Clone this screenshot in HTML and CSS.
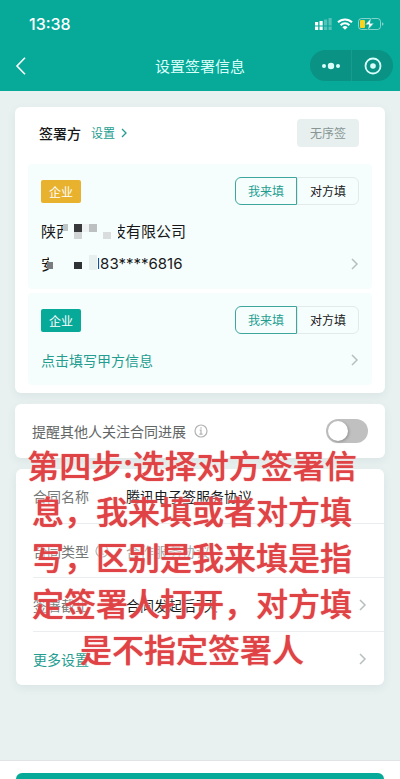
FILE: index.html
```html
<!DOCTYPE html>
<html lang="zh-CN">
<head>
    <meta charset="UTF-8">
    <meta name="viewport" content="width=device-width, initial-scale=1.0">
    <title>设置签署信息</title>
    <link rel="stylesheet" href="styles.css">
</head>
<body>
    <header class="top">
        <div class="status">
            <span class="time">13:38</span>
            <div class="status-icons">
                <svg width="17" height="12" viewBox="0 0 17 12" fill="#fff">
                    <path d="M0 4h3.200v3.500H0zM0 8.500h3.200V12H0zM4.500 3h3.200v4.500H4.500zM4.500 8.500h3.200V12H4.500z"/>
                    <path opacity=".3" d="M9 1.500h3.200v6H9zM9 8.500h3.200V12H9zM13.500 0h3.200v7.500h-3.200zM13.500 8.500h3.200V12h-3.200z"/>
                </svg>
                <svg width="16" height="12" viewBox="0 0 16 12" fill="none" stroke="#fff" stroke-width="2">
                    <path d="M1 4.300a10 10 0 0 1 14 0M3.600 7.200a6.200 6.200 0 0 1 8.800 0"/>
                    <path fill="#fff" stroke="none" d="M8 11.800 5.400 9.200a3.700 3.700 0 0 1 5.200 0z"/>
                </svg>
                <svg width="26" height="14" viewBox="0 0 26 14">
                    <rect x=".5" y="1.500" width="22" height="11" rx="3" fill="none" stroke="#fff" stroke-opacity=".5"/>
                    <path d="M24 5.200v3.600q1.500-.5 1.500-1.800T24 5.200z" fill="#fff" opacity=".5"/>
                    <rect x="2" y="3" width="5" height="8" rx="1" fill="#fbd21c"/>
                    <path d="M13.500.800 7 7.800h4L9.500 13.200 16 6.200h-4z" fill="#fff" stroke="#07a999" stroke-width=".6"/>
                </svg>
            </div>
        </div>
        <nav class="nav">
            <button class="back" aria-label="返回">
                <svg width="12" height="18" viewBox="0 0 12 18" fill="none" stroke="#fff" stroke-width="1.600"><path d="M10 .800 2 9l8 8.200"/></svg>
            </button>
            <h1>设置签署信息</h1>
            <div class="capsule">
                <button aria-label="更多">
                    <svg width="20" height="8" viewBox="0 0 20 8" fill="#d9fffa"><circle cx="3" cy="4" r="2"/><circle cx="10" cy="4" r="3.200"/><circle cx="17" cy="4" r="2"/></svg>
                </button>
                <button aria-label="关闭">
                    <svg width="18" height="18" viewBox="0 0 18 18" fill="#d9fffa"><circle cx="9" cy="9" r="7.500" fill="none" stroke="#d9fffa" stroke-width="1.800"/><circle cx="9" cy="9" r="2.800"/></svg>
                </button>
            </div>
        </nav>
    </header>

    <main>
        <section class="card signers">
            <div class="signers-head">
                <h2>签署方</h2>
                <a href="#">设置
                    <svg width="6" height="10" viewBox="0 0 6 10" fill="none" stroke="currentColor" stroke-width="1.300"><path d="M1 1l4 4-4 4"/></svg>
                </a>
                <button class="order">无序签</button>
            </div>

            <div class="party">
                <div class="party-top">
                    <span class="tag tag-yellow">企业</span>
                    <div class="segment">
                        <input type="radio" name="party1" id="p1-me" checked><label for="p1-me">我来填</label>
                        <input type="radio" name="party1" id="p1-other"><label for="p1-other">对方填</label>
                    </div>
                </div>
                <div class="line company">
                    <span>陕西</span>
                    <svg class="mosaic" width="55" height="20" viewBox="0 0 55 20">
                        <path fill="#f6fdfd" d="M0 0h55v20H0z"/>
                        <path fill="#bfc4c5" d="M0 3h5v7H0z"/>
                        <path fill="#37393b" d="M11 3h8v8h-8z"/>
                        <path fill="#d0d4d5" d="M11 11h8v7h-8z"/>
                        <path fill="#eef2f3" d="M19 3h7v8h-7z"/>
                        <path fill="#bcc0c1" d="M26 3h8v8h-8z"/>
                        <path fill="#d9dddd" d="M40 11h8v7h-8z"/>
                    </svg>
                    <span>技有限公司</span>
                </div>
                <div class="line person">
                    <span>安</span>
                    <svg class="mosaic" width="51" height="20" viewBox="0 0 51 20">
                        <path fill="#f6fdfd" d="M2 0h49v20H2z"/>
                        <path fill="#797d7f" d="M0 8h6v7H0z"/>
                        <path fill="#303335" d="M27 8h8v7h-8z"/>
                        <path fill="#e8efef" d="M42 1h8v15h-8z"/>
                    </svg>
                    <span class="phone">183****6816</span>
                    <svg class="arrow" width="8" height="12" viewBox="0 0 8 12"><path d="M1 1l5 5-5 5"/></svg>
                </div>
            </div>

            <div class="party">
                <div class="party-top">
                    <span class="tag">企业</span>
                    <div class="segment">
                        <input type="radio" name="party2" id="p2-me" checked><label for="p2-me">我来填</label>
                        <input type="radio" name="party2" id="p2-other"><label for="p2-other">对方填</label>
                    </div>
                </div>
                <a class="line" href="#">点击填写甲方信息
                    <svg class="arrow" width="8" height="12" viewBox="0 0 8 12"><path d="M1 1l5 5-5 5"/></svg>
                </a>
            </div>
        </section>

        <div class="options">
            <section class="card notify">
                <label for="notify">提醒其他人关注合同进展</label>
                <svg class="info" width="14" height="14" viewBox="0 0 14 14"><circle cx="7" cy="7" r="6"/><path d="M7 3.300v1.500M5.700 6.200H7v3.900M5.400 10.200h3.200"/></svg>
                <input type="checkbox" class="switch" id="notify">
            </section>

            <section class="card details">
                <div class="row">
                    <span class="name">合同名称</span>
                    <span class="value">腾讯电子签服务协议</span>
                </div>
                <div class="row">
                    <span class="name">合同类型
                        <svg class="info" width="14" height="14" viewBox="0 0 14 14"><circle cx="7" cy="7" r="6"/><path d="M7 3.300v1.500M5.700 6.200H7v3.900M5.400 10.200h3.200"/></svg>
                    </span>
                    <span class="value muted">合作服务协议</span>
                </div>
                <div class="row">
                    <span class="name">签署截止</span>
                    <span class="value">合同发起后7天</span>
                    <svg class="arrow" width="8" height="12" viewBox="0 0 8 12"><path d="M1 1l5 5-5 5"/></svg>
                </div>
                <a class="row" href="#">更多设置
                    <svg class="arrow" width="8" height="12" viewBox="0 0 8 12"><path d="M1 1l5 5-5 5"/></svg>
                </a>
            </section>

            <p class="caption">第四步:选择对方签署信<br>息，我来填或者对方填<br>写，区别是我来填是指<br>定签署人打开，对方填<br>是不指定签署人</p>
        </div>
    </main>

    <footer class="bottom">
        <button class="submit" aria-label="下一步"></button>
    </footer>
</body>
</html>
```

FILE: styles.css
```css
* {
    box-sizing: border-box;
}

body {
    margin: 0;
    min-height: 100vh;
    display: flex;
    flex-direction: column;
    background-color: #e8f1f0;
    color: #161819;
    font-family: "Noto Sans CJK SC", sans-serif;
    font-size: 14px;
    line-height: 20px;
}

h1, h2, p {
    margin: 0;
}

button {
    padding: 0;
    border: none;
    background: none;
    font: inherit;
    cursor: pointer;
}

a {
    color: #239d90;
    text-decoration: none;
}

svg {
    flex: none;
}

/* top bar */
.top {
    background-color: #07a999;
    color: #fff;
    padding-bottom: 8px;
}

.status {
    display: flex;
    align-items: center;
    justify-content: space-between;
    height: 48px;
    padding: 0 16px 0 29px;
}

.time {
    font-family: Inter, sans-serif;
    font-size: 16px;
    font-weight: 500;
}

.status-icons {
    display: flex;
    align-items: center;
    gap: 5px;
}

.nav {
    display: grid;
    grid-template-columns: 1fr auto 1fr;
    align-items: center;
    height: 35px;
    padding: 0 7px 0 15px;
}

.back {
    display: flex;
    justify-self: start;
}

h1 {
    padding-right: 8px;
    font-size: 15px;
    font-weight: 400;
    color: #d9fffa;
}

.capsule {
    justify-self: end;
    display: flex;
    width: 83px;
    height: 31px;
    border-radius: 16px;
    background-color: #0a9285;
}

.capsule button {
    flex: 1;
    display: flex;
    align-items: center;
    justify-content: center;
}

.capsule button + button {
    border-left: 1px solid #1b9a8e;
}

/* cards */
main {
    flex: 1;
    padding: 16px 0;
}

.card {
    margin: 0 15px;
    border-radius: 6px;
    background-color: #fff;
    box-shadow: 0 3px 8px rgba(60, 90, 100, 0.08);
}

.arrow {
    margin-left: auto;
    fill: none;
    stroke: #b9bfbf;
    stroke-width: 1.5;
}

.info {
    fill: none;
    stroke: #b3b3b3;
    stroke-width: 1.2;
}

.signers {
    padding: 12px 13px 8px;
}

.signers-head {
    display: flex;
    align-items: center;
    gap: 10px;
    margin-bottom: 17px;
    padding: 0 13px 0 11px;
}

h2 {
    font-size: 14px;
    font-weight: 500;
}

.signers-head a {
    display: flex;
    align-items: center;
    gap: 6px;
    font-size: 12px;
}

.order {
    width: 62px;
    height: 28px;
    margin-left: auto;
    border-radius: 4px;
    background-color: #e8f0ef;
    color: #879593;
    font-size: 12px;
}

.party {
    padding: 13px 13px 9px;
    border-radius: 4px;
    background-color: #f6fdfd;
}

.party + .party {
    margin-top: 4px;
}

.party-top {
    display: flex;
    align-items: center;
    justify-content: space-between;
    margin-bottom: 9px;
}

.tag {
    width: 40px;
    border-radius: 2px;
    background-color: #07a999;
    color: #fff;
    font-size: 12px;
    line-height: 23px;
    text-align: center;
}

.tag-yellow {
    background-color: #e8b22f;
}

.segment {
    display: flex;
}

.segment input {
    position: absolute;
    opacity: 0;
}

.segment label {
    width: 62px;
    border: 1px solid #e2eaea;
    border-radius: 0 6px 6px 0;
    font-size: 12px;
    line-height: 26px;
    text-align: center;
    cursor: pointer;
}

.segment label:first-of-type {
    border-radius: 6px 0 0 6px;
}

.segment input:checked + label {
    border-color: #3da79d;
    color: #239d90;
}

.line {
    display: flex;
    align-items: center;
    height: 33px;
}

.company, .person {
    font-size: 15px;
}

.mosaic {
    position: relative;
}

.company .mosaic {
    margin: 0 -7px 0 -8px;
}

.person .mosaic {
    margin: 0 -4px 0 -9px;
}

.phone {
    font-family: Inter, sans-serif;
}

/* options */
.options {
    position: relative;
    margin-top: 11px;
}

.notify {
    display: flex;
    align-items: center;
    gap: 8px;
    height: 54px;
    padding: 0 17px;
    color: #626565;
}

.switch {
    appearance: none;
    display: flex;
    width: 42px;
    height: 24px;
    margin: 0 0 0 auto;
    padding: 2px;
    border-radius: 12px;
    background-color: #c0c0c0;
    cursor: pointer;
}

.switch::before {
    content: "";
    width: 20px;
    height: 20px;
    border-radius: 50%;
    background-color: #fff;
    box-shadow: 1px 1px 3px rgba(0, 0, 0, 0.25);
}

.switch:checked {
    justify-content: flex-end;
    background-color: #07a999;
}

.details {
    margin: 11px 16px 0;
    padding-left: 17px;
}

.row {
    display: flex;
    align-items: center;
    height: 54px;
    padding-right: 17px;
}

.row + .row {
    border-top: 1px solid #ebeeee;
}

.name {
    display: flex;
    align-items: center;
    gap: 6px;
    width: 93px;
    color: #737676;
}

.muted {
    color: #a0a4a4;
}

.caption {
    position: absolute;
    top: 37px;
    left: 0;
    right: 16px;
    color: #e04346;
    font-size: 32px;
    font-weight: 500;
    line-height: 46px;
    text-align: center;
    text-shadow: 0 0 1px #e04346, 0 0 3px #fff;
    pointer-events: none;
}

/* bottom bar, only the upper edge of the button shows */
.bottom {
    height: 19px;
    padding: 12px 16px 0;
    border-top: 1px solid #e0e4e4;
    background-color: #fff;
    overflow: hidden;
}

.submit {
    width: 100%;
    height: 44px;
    border-radius: 6px;
    background-color: #07a999;
}
```
